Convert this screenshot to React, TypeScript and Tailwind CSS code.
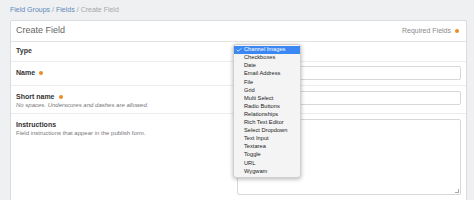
import { Check } from "lucide-react";

const fieldTypes = [
  "Channel Images",
  "Checkboxes",
  "Date",
  "Email Address",
  "File",
  "Grid",
  "Multi Select",
  "Radio Buttons",
  "Relationships",
  "Rich Text Editor",
  "Select Dropdown",
  "Text Input",
  "Textarea",
  "Toggle",
  "URL",
  "Wygwam",
];

const Dot = () => (
  <span className="inline-block w-[4px] h-[4px] rounded-full bg-[#f08a24] ml-[4px] align-middle" />
);

const App = () => {
  return (
    <div
      className="w-[474px] h-[200px] overflow-hidden bg-[#eff0f2] text-[#333]"
      style={{ fontFamily: '"Liberation Sans", Arial, sans-serif' }}
    >
      {/* breadcrumb */}
      <div className="h-[20px] pl-[10px] flex items-center text-[7px] text-[#5d88bd]">
        <span>Field Groups</span>
        <span className="text-[#a0a0a0] mx-[2px]">/</span>
        <span>Fields</span>
        <span className="text-[#a0a0a0] mx-[2px]">/</span>
        <span className="text-[#a8a8a8]">Create Field</span>
      </div>

      {/* panel */}
      <div className="relative ml-[10px] w-[457px] h-[190px] bg-white border border-[#dcdcdc] rounded-t-[2px]">
        <div className="h-[21px] border-b border-[#e3e3e3] flex items-center justify-between pl-[5px] pr-[7px]">
          <span className="text-[9px] text-[#666]">Create Field</span>
          <span className="text-[7px] text-[#8a8a8a] flex items-center">
            Required Fields
            <Dot />
          </span>
        </div>

        {/* Type */}
        <div className="h-[20px] flex items-center border-b border-[#ececec] pl-[5px]">
          <span className="text-[7px] font-bold">Type</span>
        </div>

        {/* Name */}
        <div className="h-[24px] flex border-b border-[#ececec] pl-[5px] pr-[5px]">
          <div className="w-[221px] pt-[6px]">
            <span className="text-[7px] font-bold flex items-center">
              Name
              <Dot />
            </span>
          </div>
          <div className="flex-1 pt-[4px]">
            <div className="h-[14px] border border-[#d8d8d8] rounded-[2px]" />
          </div>
        </div>

        {/* Short name */}
        <div className="h-[28px] flex border-b border-[#ececec] pl-[5px] pr-[5px]">
          <div className="w-[221px] pt-[6px] flex flex-col">
            <span className="text-[7px] font-bold flex items-center leading-[9px]">
              Short name
              <Dot />
            </span>
            <span className="text-[6px] italic text-[#777] leading-[9px]">
              No spaces. Underscores and dashes are allowed.
            </span>
          </div>
          <div className="flex-1 pt-[5px]">
            <div className="h-[14px] border border-[#d8d8d8] rounded-[2px]" />
          </div>
        </div>

        {/* Instructions */}
        <div className="flex pl-[5px] pr-[5px]">
          <div className="w-[221px] pt-[6px] flex flex-col">
            <span className="text-[7px] font-bold leading-[9px]">Instructions</span>
            <span className="text-[6px] text-[#777] leading-[9px]">
              Field instructions that appear in the publish form.
            </span>
          </div>
          <div className="flex-1 pt-[5px]">
            <div className="relative h-[76px] border border-[#d8d8d8] rounded-[2px]">
              <span className="absolute right-[1px] bottom-[1px] w-[4px] h-[4px] border-r border-b border-[#aaa]" />
            </div>
          </div>
        </div>

        {/* open select dropdown */}
        <div className="absolute left-[222px] top-[23px] w-[68px] py-[1px] bg-[#f4f4f4] rounded-[3px] shadow-[0_1px_4px_rgba(0,0,0,0.3)] border border-[#d0d0d0]">
          {fieldTypes.map((t, i) => (
            <div
              key={t}
              className={
                i === 0
                  ? "h-[8.1px] flex items-center bg-[#3b88f5] text-white text-[5.7px] leading-none"
                  : "h-[8.1px] flex items-center text-[#222] text-[5.7px] leading-none"
              }
            >
              <span className="w-[10px] flex justify-center">
                {i === 0 && <Check size={6} strokeWidth={3} />}
              </span>
              {t}
            </div>
          ))}
        </div>
      </div>
    </div>
  );
};

export default App;
